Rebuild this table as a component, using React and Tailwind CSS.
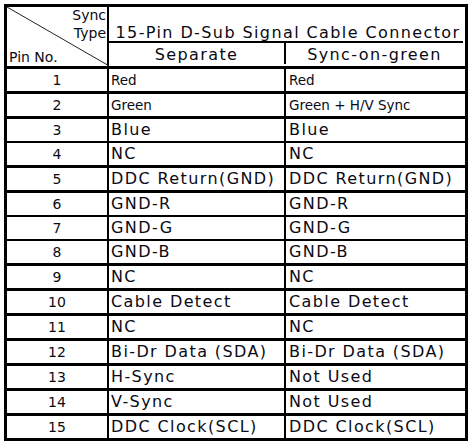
const rows = [
  { pin: '1', sep: 'Red', sog: 'Red', small: true, b: 'border-b-[3px]' },
  { pin: '2', sep: 'Green', sog: 'Green + H/V Sync', small: true, b: 'border-b-[3px]' },
  { pin: '3', sep: 'Blue', sog: 'Blue', b: 'border-b-2' },
  { pin: '4', sep: 'NC', sog: 'NC', b: 'border-b-[3px]' },
  { pin: '5', sep: 'DDC Return(GND)', sog: 'DDC Return(GND)', b: 'border-b-[3px]' },
  { pin: '6', sep: 'GND-R', sog: 'GND-R', b: 'border-b-2' },
  { pin: '7', sep: 'GND-G', sog: 'GND-G', b: 'border-b-2' },
  { pin: '8', sep: 'GND-B', sog: 'GND-B', b: 'border-b-[3px]' },
  { pin: '9', sep: 'NC', sog: 'NC', b: 'border-b-[3px]' },
  { pin: '10', sep: 'Cable Detect', sog: 'Cable Detect', b: 'border-b-[3px]' },
  { pin: '11', sep: 'NC', sog: 'NC', b: 'border-b-[3px]' },
  { pin: '12', sep: 'Bi-Dr Data (SDA)', sog: 'Bi-Dr Data (SDA)', b: 'border-b-[3px]' },
  { pin: '13', sep: 'H-Sync', sog: 'Not Used', b: 'border-b-[3px]' },
  { pin: '14', sep: 'V-Sync', sog: 'Not Used', b: 'border-b-[3px]' },
  { pin: '15', sep: 'DDC Clock(SCL)', sog: 'DDC Clock(SCL)', b: '' },
]

const font = { fontFamily: '"DejaVu Sans", sans-serif' }

function Cell({ text, small, last }) {
  return (
    <div
      className={`h-[22px] flex items-center whitespace-nowrap overflow-hidden ${
        last ? 'flex-1 pl-[3px]' : 'w-[177px] pl-[2px] border-r-2 border-black'
      } ${small ? 'text-[13.5px] tracking-normal' : 'text-[16px] tracking-[1.4px]'}`}
    >
      {text}
    </div>
  )
}

export default function App() {
  return (
    <div className="bg-white w-[473px] h-[446px] p-1 text-[#0a0a14]" style={font}>
      <div className="w-[464px] border-[3px] border-black">
        <div className="flex border-b-[3px] border-black">
          <div className="relative w-[102px] h-[59px] border-r-2 border-black flex flex-col text-[14px]">
            <svg className="absolute inset-0" width="102" height="59" viewBox="0 0 102 59">
              <line x1="0" y1="0" x2="104" y2="60" stroke="#222" strokeWidth="1" />
            </svg>
            <div className="text-right leading-[16px] pr-[1px]">Sync</div>
            <div className="text-right leading-[17px] pr-[1px] mt-[2px]">Type</div>
            <div className="mt-auto leading-[17px] pl-[2px]">Pin No.</div>
          </div>
          <div className="w-[354px] flex flex-col">
            <div className="h-[36px] border-b-2 border-black flex items-end justify-center text-[16px] tracking-[1.4px] leading-[17px] pl-[4px] whitespace-nowrap">
              15-Pin D-Sub Signal Cable Connector
            </div>
            <div className="h-[21px] flex text-[16px] tracking-[1.4px] leading-[18px]">
              <div className="w-[177px] border-r-2 border-black text-center pt-[3px]">Separate</div>
              <div className="flex-1 text-center pt-[3px]">Sync-on-green</div>
            </div>
          </div>
        </div>
        {rows.map(r => (
          <div key={r.pin} className={`flex ${r.b} border-black`}>
            <div className="w-[102px] h-[22px] border-r-2 border-black flex items-center justify-center text-[14px]">
              {r.pin}
            </div>
            <Cell text={r.sep} small={r.small} />
            <Cell text={r.sog} small={r.small} last />
          </div>
        ))}
      </div>
    </div>
  )
}
